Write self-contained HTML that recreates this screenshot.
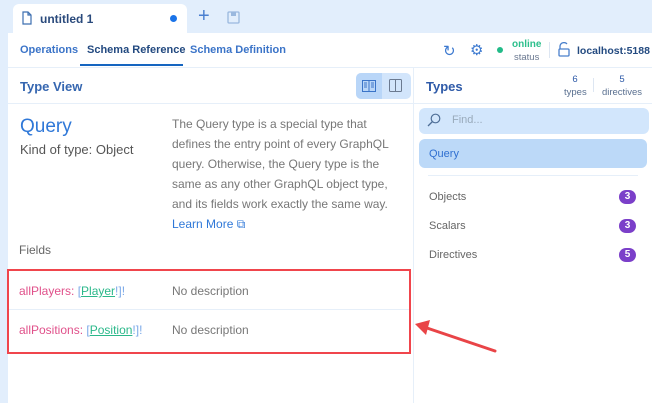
<!DOCTYPE html>
<html><head><style>
*{box-sizing:border-box;margin:0;padding:0}
body{width:652px;height:403px;background:#e2eefc;font-family:"Liberation Sans",sans-serif;position:relative;overflow:hidden;color:#555}
.abs{position:absolute}
.tab{left:13px;top:4px;width:174px;height:30px;background:#fff;border-radius:6px 6px 0 0}
.panel{left:8px;top:33px;width:644px;height:370px;background:#fff}
.b{font-weight:bold}
.blue{color:#1f6fd1}
.hl{border-top:1px solid #e6eff9}
.badge{width:17px;height:14px;border-radius:7px;background:#7b3fc9;color:#fff;font-size:10px;text-align:center;line-height:14px;font-weight:bold}
</style></head><body>
<div class="abs tab"></div>
<svg class="abs" style="left:21px;top:11px" width="12" height="14" viewBox="0 0 12 14"><path d="M2 1h5l3 3v9H2z M7 1v3h3" fill="none" stroke="#3d6fb0" stroke-width="1.2"/></svg>
<div class="abs b" style="left:40px;top:12px;font-size:12px;color:#2a4a7c">untitled 1</div>
<div class="abs" style="left:170px;top:15px;width:7px;height:7px;border-radius:50%;background:#1a73e8"></div>
<div class="abs" style="left:198px;top:5px;font-size:20px;color:#4a7fd0;font-weight:300">+</div>
<svg class="abs" style="left:227px;top:11px" width="13" height="13"><rect x="1" y="1" width="11" height="11" rx="1" fill="none" stroke="#9ab8de" stroke-width="1.3"/><rect x="4" y="1" width="5" height="4" fill="#9ab8de"/></svg>
<div class="abs panel"></div>
<div class="abs b blue" style="left:20px;top:44px;font-size:11px;color:#3b74c8">Operations</div>
<div class="abs b" style="left:87px;top:44px;font-size:11px;color:#234a80">Schema Reference</div>
<div class="abs" style="left:80px;top:64px;width:103px;height:2px;background:#1565c0"></div>
<div class="abs b" style="left:190px;top:44px;font-size:11px;color:#3b74c8">Schema Definition</div>
<div class="abs hl" style="left:8px;top:67px;width:644px"></div>
<div class="abs" style="left:443px;top:42px;font-size:15px;color:#3d7ad0">↻</div>
<div class="abs" style="left:470px;top:41px;font-size:15px;color:#3d7ad0">⚙</div>
<div class="abs" style="left:497px;top:47px;width:6px;height:6px;border-radius:50%;background:#22bb88"></div>
<div class="abs b" style="left:512px;top:39px;font-size:10px;color:#2cbf8c">online</div>
<div class="abs" style="left:514px;top:52px;font-size:9.5px;color:#6a7890">status</div>
<div class="abs" style="left:549px;top:42px;width:1px;height:16px;background:#dde6f2"></div>
<svg class="abs" style="left:558px;top:42px" width="12" height="15"><path d="M2 7V4a4 4 0 0 1 7-2" fill="none" stroke="#4a80cc" stroke-width="1.3"/><rect x="1" y="7" width="10" height="7" rx="1" fill="none" stroke="#4a80cc" stroke-width="1.3"/></svg>
<div class="abs b" style="left:577px;top:45px;font-size:10.5px;color:#234a80">localhost:5188</div>
<div class="abs b" style="left:20px;top:79px;font-size:13px;color:#3566b0">Type View</div>
<div class="abs" style="left:356px;top:73px;width:55px;height:26px;border-radius:5px;background:#d2e5fb"></div>
<div class="abs" style="left:356px;top:73px;width:26px;height:26px;border-radius:5px 0 0 5px;background:#b9d6f8"></div>
<svg class="abs" style="left:362px;top:80px" width="14" height="12"><rect x="0.5" y="0.5" width="13" height="11" fill="none" stroke="#3a74c8"/><path d="M7 0v12M2 3h3M2 5h3M2 7h3M9 3h3M9 5h3M9 7h3" stroke="#3a74c8"/></svg>
<svg class="abs" style="left:389px;top:79px" width="13" height="13"><rect x="0.5" y="0.5" width="12" height="12" rx="1" fill="none" stroke="#6b7a90"/><path d="M6.5 0v13" stroke="#6b7a90"/></svg>
<div class="abs" style="left:413px;top:67px;width:1px;height:336px;background:#e6eff9"></div>
<div class="abs hl" style="left:8px;top:103px;width:644px"></div>
<div class="abs b" style="left:426px;top:79px;font-size:13px;color:#2e5aa8">Types</div>
<div class="abs" style="left:564px;top:73px;width:22px;text-align:center;font-size:9.5px;color:#2e5aa8;line-height:13px">6<br><span style="color:#5a7090">types</span></div>
<div class="abs" style="left:593px;top:78px;width:1px;height:14px;background:#dde6f2"></div>
<div class="abs" style="left:600px;top:73px;width:44px;text-align:center;font-size:9.5px;color:#2e5aa8;line-height:13px">5<br><span style="color:#5a7090">directives</span></div>
<div class="abs" style="left:20px;top:116px;font-size:19px;color:#2f78d8">Query</div>
<div class="abs" style="left:20px;top:142px;font-size:13px;color:#555">Kind of type: Object</div>
<div class="abs" style="left:172px;top:114px;font-size:12px;line-height:20px;color:#777;width:226px">The Query type is a special type that defines the entry point of every GraphQL query. Otherwise, the Query type is the same as any other GraphQL object type, and its fields work exactly the same way.<br><span style="color:#2f78d8">Learn More ⧉</span></div>
<div class="abs" style="left:19px;top:243px;font-size:12px;color:#666">Fields</div>
<div class="abs" style="left:7px;top:269px;width:404px;height:85px;border:2px solid #f0454c"></div>
<div class="abs hl" style="left:9px;top:309px;width:400px"></div>
<div class="abs" style="left:19px;top:284px;font-size:12px;color:#e0508a">allPlayers: <span style="color:#7aa8e8">[<u style="color:#2bb88a">Player</u>!]!</span></div>
<div class="abs" style="left:19px;top:323px;font-size:12px;color:#e0508a">allPositions: <span style="color:#7aa8e8">[<u style="color:#2bb88a">Position</u>!]!</span></div>
<div class="abs" style="left:172px;top:284px;font-size:12px;color:#777">No description</div>
<div class="abs" style="left:172px;top:323px;font-size:12px;color:#777">No description</div>
<svg class="abs" style="left:410px;top:312px" width="95" height="45"><path d="M85 39L14 15" stroke="#e94447" stroke-width="3" stroke-linecap="round"/><path d="M5 12L20 8L16 23z" fill="#e94447"/></svg>
<div class="abs" style="left:419px;top:108px;width:230px;height:26px;border-radius:6px;background:#d2e6fc"></div>
<svg class="abs" style="left:427px;top:113px" width="14" height="14"><circle cx="8.5" cy="5.5" r="4.3" fill="none" stroke="#4f6f98" stroke-width="1.2"/><path d="M5.5 8.5L1 13" stroke="#4f6f98" stroke-width="1.3"/></svg>
<div class="abs" style="left:452px;top:114px;font-size:11px;color:#9ab">Find...</div>
<div class="abs" style="left:419px;top:139px;width:228px;height:29px;border-radius:6px;background:#bcd9f8"></div>
<div class="abs" style="left:429px;top:148px;font-size:11px;color:#2f6fd0">Query</div>
<div class="abs hl" style="left:428px;top:175px;width:210px"></div>
<div class="abs" style="left:429px;top:191px;font-size:11px;color:#666">Objects</div>
<div class="abs" style="left:429px;top:220px;font-size:11px;color:#666">Scalars</div>
<div class="abs" style="left:429px;top:249px;font-size:11px;color:#666">Directives</div>
<div class="abs badge" style="left:619px;top:190px">3</div>
<div class="abs badge" style="left:619px;top:219px">3</div>
<div class="abs badge" style="left:619px;top:248px">5</div>
</body></html>
